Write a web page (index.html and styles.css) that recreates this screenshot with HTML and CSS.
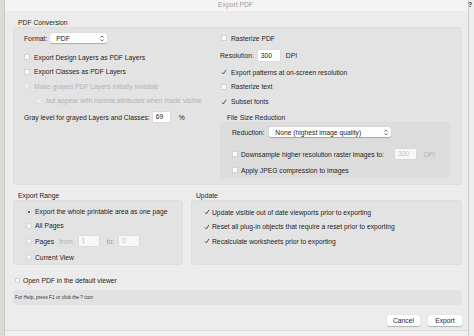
FILE: index.html
```html
<!DOCTYPE html>
<html>
<head>
<meta charset="utf-8">
<link rel="stylesheet" href="styles.css">
</head>
<body>
<div class="screen">
  <div class="strip-left"></div>
  <div class="dialog">
    <div class="titlebar"><span class="title">Export PDF</span></div>
    <div class="content">
      <div class="group-label">PDF Conversion</div>
      <div class="box conv">
        <div class="col col-left">
          <div class="row r-format">
            <span class="lbl">Format:</span>
            <div class="select sel-format"><span>PDF</span>
              <svg class="arrows" width="4" height="7" viewBox="0 0 4 7"><path d="M0.5 2.5 L2 1 L3.5 2.5 M0.5 4.5 L2 6 L3.5 4.5" fill="none" stroke="#555" stroke-width="0.8"/></svg>
            </div>
          </div>
          <div class="row r-first"><span class="cb"></span>Export Design Layers as PDF Layers</div>
          <div class="row"><span class="cb"></span>Export Classes as PDF Layers</div>
          <div class="row disabled"><span class="cb"></span>Make grayed PDF Layers initially invisible</div>
          <div class="row disabled indent"><span class="cb"></span>but appear with normal attributes when made visible</div>
          <div class="row r-gray">
            <span class="lbl">Gray level for grayed Layers and Classes:</span>
            <span class="input in-gray">69</span>
            <span class="unit-pct">%</span>
          </div>
        </div>
        <div class="col col-right">
          <div class="row"><span class="cb"></span>Rasterize PDF</div>
          <div class="row r-res"><span class="lbl">Resolution:</span><span class="input in-res">300</span><span class="unit-dpi">DPI</span></div>
          <div class="row r-pat"><span class="ck"><svg width="6" height="6" viewBox="0 0 6 6"><path d="M1 3.4 L2.4 5 L5 0.8" fill="none" stroke="#333" stroke-width="0.8"/></svg></span>Export patterns at on-screen resolution</div>
          <div class="row"><span class="cb"></span>Rasterize text</div>
          <div class="row r-sub"><span class="ck"><svg width="6" height="6" viewBox="0 0 6 6"><path d="M1 3.4 L2.4 5 L5 0.8" fill="none" stroke="#333" stroke-width="0.8"/></svg></span>Subset fonts</div>
          <div class="sub-label">File Size Reduction</div>
          <div class="inner-box">
            <div class="row r-red">
              <span class="lbl">Reduction:</span>
              <div class="select sel-red"><span>None (highest image quality)</span>
                <svg class="arrows" width="4" height="7" viewBox="0 0 4 7"><path d="M0.5 2.5 L2 1 L3.5 2.5 M0.5 4.5 L2 6 L3.5 4.5" fill="none" stroke="#555" stroke-width="0.8"/></svg>
              </div>
            </div>
            <div class="row r-down"><span class="cb"></span>Downsample higher resolution raster images to:<span class="input in-down dis">300</span><span class="unit-dpi2">DPI</span></div>
            <div class="row r-jpeg"><span class="cb"></span>Apply JPEG compression to images</div>
          </div>
        </div>
      </div>

      <div class="bottom-groups">
        <div class="grp grp-range">
          <div class="group-label">Export Range</div>
          <div class="box box-range">
            <div class="row"><span class="radio on"></span>Export the whole printable area as one page</div>
            <div class="row"><span class="radio"></span>All Pages</div>
            <div class="row r-pages"><span class="radio"></span>Pages<span class="from">from:</span><span class="input in-pg dis">1</span><span class="to">to:</span><span class="input in-pg dis">0</span></div>
            <div class="row r-cur"><span class="radio"></span>Current View</div>
          </div>
        </div>
        <div class="grp grp-update">
          <div class="group-label">Update</div>
          <div class="box box-update">
            <div class="row"><span class="ck"><svg width="6" height="6" viewBox="0 0 6 6"><path d="M1 3.4 L2.4 5 L5 0.8" fill="none" stroke="#333" stroke-width="0.8"/></svg></span>Update visible out of date viewports prior to exporting</div>
            <div class="row"><span class="ck"><svg width="6" height="6" viewBox="0 0 6 6"><path d="M1 3.4 L2.4 5 L5 0.8" fill="none" stroke="#333" stroke-width="0.8"/></svg></span>Reset all plug-in objects that require a reset prior to exporting</div>
            <div class="row"><span class="ck"><svg width="6" height="6" viewBox="0 0 6 6"><path d="M1 3.4 L2.4 5 L5 0.8" fill="none" stroke="#333" stroke-width="0.8"/></svg></span>Recalculate worksheets prior to exporting</div>
          </div>
        </div>
      </div>

      <div class="row r-open"><span class="cb"></span>Open PDF in the default viewer</div>
      <div class="helpbar"><span>For Help, press F1 or click the ? icon</span></div>
      <div class="buttons">
        <span class="btn">Cancel</span>
        <span class="btn">Export</span>
      </div>
    </div>
  </div>
  <div class="strip-right"><span class="q">?</span></div>
</div>
</body>
</html>
```

FILE: styles.css
```css
* { box-sizing: border-box; }
html, body { margin: 0; padding: 0; }
body {
  width: 474px;
  height: 336px;
  overflow: hidden;
  background: #f0f0f0;
  font-family: "Liberation Sans", Arial, sans-serif;
  font-size: 6.75px;
  color: #1e1e1e;
}
.screen {
  display: flex;
  width: 474px;
  height: 336px;
}
.strip-left {
  width: 5px;
  background: #dcdcd4;
  border-right: 1px solid #c9c9c4;
}
.strip-right {
  width: 6px;
  background: #eeeeee;
  border-left: 1px solid #cfcfcf;
  position: relative;
}
.strip-right .q {
  position: absolute;
  left: -1px;
  top: 1px;
  font-size: 7px;
  font-weight: bold;
  color: #333;
}
.dialog {
  flex: 1;
  display: flex;
  flex-direction: column;
  background: #ececec;
  height: 331px;
  border-bottom: 1px solid #dcdcdc;
}
.titlebar {
  height: 11px;
  background: #f4f4f4;
  display: flex;
  justify-content: center;
  align-items: center;
  padding-right: 2px;
}
.title {
  color: #a0a0a0;
  font-size: 6.75px;
  line-height: 8px;
  margin-top: -2px;
}
.content {
  padding: 7px 6px 0 8px;
  display: flex;
  flex-direction: column;
}
.group-label {
  height: 9px;
  line-height: 9px;
  padding-left: 5px;
  font-size: 6.75px;
}
.box {
  background: #e3e3e3;
  border: 1px solid #dedede;
  border-radius: 3px;
}
.conv {
  height: 158px;
  display: flex;
}
.col {
  display: flex;
  flex-direction: column;
}
.col-left {
  width: 206px;
  padding: 3px 0 0 10px;
}
.col-right {
  flex: 1;
  padding: 3px 10px 0 0;
}
.row {
  display: flex;
  align-items: center;
  height: 14.5px;
  white-space: nowrap;
}
.cb {
  width: 6px;
  height: 6px;
  background: #fbfbfb;
  border: 0.5px solid #d0d0d0;
  border-radius: 1px;
  margin-right: 4px;
  flex: none;
}
.ck {
  width: 6px;
  height: 6px;
  margin-right: 4px;
  flex: none;
  display: flex;
}
.radio {
  width: 6px;
  height: 6px;
  border-radius: 50%;
  background: #fbfbfb;
  border: 0.5px solid #d0d0d0;
  margin-right: 3px;
  flex: none;
  display: flex;
  align-items: center;
  justify-content: center;
}
.radio.on::after {
  content: "";
  width: 2px;
  height: 2px;
  border-radius: 50%;
  background: #222;
}
.disabled { color: #b4b4b4; }
.disabled .cb { background: #ececec; border-color: #dedede; }
.indent { padding-left: 12px; }
.r-format { height: 14px; }
.r-first { margin-top: 5px; }
.r-gray { margin-top: 2px; height: 14px; }
.lbl { margin-right: 5px; }
.select {
  display: flex;
  align-items: center;
  justify-content: space-between;
  background: #fdfdfd;
  border-radius: 2px;
  box-shadow: 0 0.5px 1px rgba(0,0,0,0.25);
  height: 10px;
  padding: 0 3px 0 6px;
}
.sel-format { width: 57px; margin-left: -2px; }
.input {
  background: #ffffff;
  height: 10px;
  line-height: 10px;
  padding-left: 3px;
  box-shadow: 0 0 0 0.5px #d4d4d4;
}
.input.dis { color: #c4c4c4; background: #f7f7f7; }
.in-gray { width: 17px; margin-left: -2px; }
.unit-pct { margin-left: 9px; }
.r-res { margin-top: 3px; height: 14px; }
.r-res .lbl { margin-right: 4px; }
.in-res { width: 22px; height: 11px; line-height: 11px; }
.unit-dpi { margin-left: 6px; }
.r-pat { margin-top: 2.5px; }
.col-right > .row .cb, .col-right > .row .ck { margin-left: 1px; margin-right: 4px; }
.r-sub { margin-top: 0.5px; }
.sub-label {
  margin-top: 5px;
  height: 8px;
  line-height: 8px;
  padding-left: 7px;
  font-size: 6.75px;
}
.inner-box {
  margin-top: 0;
  height: 56px;
  width: 230px;
  background: #dcdcdc;
  border-radius: 3px;
  padding: 3px 0 0 12px;
  display: flex;
  flex-direction: column;
}
.r-red { height: 14px; }
.r-red .lbl { margin-right: 5px; }
.sel-red { width: 122px; }
.r-down { margin-top: 8px; height: 14px; }
.r-down .cb, .r-jpeg .cb { margin-right: 3px; }
.in-down { width: 21px; margin-left: 11px; }
.unit-dpi2 { margin-left: 8px; color: #b4b4b4; }
.r-jpeg { margin-top: 2px; height: 14px; }

.bottom-groups {
  display: flex;
  margin-top: 7px;
  gap: 8px;
}
.grp { display: flex; flex-direction: column; }
.grp .group-label { height: 8px; line-height: 8px; }
.grp-range { width: 170px; }
.grp-update { flex: 1; }
.box-range, .box-update {
  height: 65px;
  padding: 4px 0 0 12px;
  display: flex;
  flex-direction: column;
}
.box-range .row { height: 14px; }
.r-pages, .r-cur { margin-top: 2px; }
.from { color: #b4b4b4; margin-left: 5px; margin-right: 4px; }
.in-pg { width: 20px; }
.to { color: #9a9a9a; margin-left: 8px; margin-right: 5px; }
.box-update .row { height: 14.5px; }
.box-update .ck { margin-right: 2px; }

.r-open {
  margin-top: 9px;
  height: 12px;
  padding-left: 2px;
}
.r-open .cb { width: 5px; height: 5px; margin-right: 3px; }
.helpbar {
  margin-top: 4px;
  height: 15px;
  background: #e2e2e2;
  border-radius: 2px;
  display: flex;
  align-items: center;
  padding-left: 2px;
}
.helpbar span { font-size: 4.8px; color: #333; }
.buttons {
  margin-top: 10px;
  display: flex;
  justify-content: flex-end;
  gap: 8px;
}
.btn {
  height: 11px;
  line-height: 11px;
  background: #ffffff;
  border-radius: 2px;
  box-shadow: 0 0.5px 1px rgba(0,0,0,0.25);
  text-align: center;
}
.btn:first-child { width: 33px; }
.btn:last-child { width: 34px; }
```
